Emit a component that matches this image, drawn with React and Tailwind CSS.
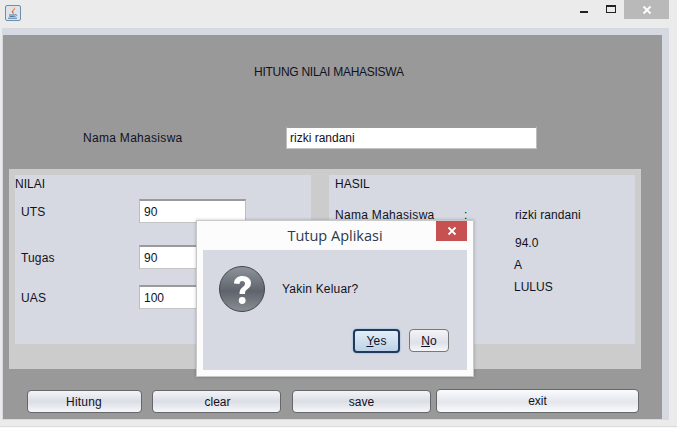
const font = { fontFamily: '"Liberation Sans", Arial, sans-serif' };

function JavaIcon() {
  return (
    <svg width="16" height="16" viewBox="0 0 16 16">
      <rect x="0.5" y="0.5" width="15" height="15" rx="1.5" fill="#dfe4ea" stroke="#6d8fae" />
      <path d="M9.5 2C10.5 4 6.5 5 6.8 7C7 8 8 8.5 8 9.5C9.5 8.2 8.3 7 8.3 6.2C8.3 5 11.5 4.2 9.5 2Z" fill="#e8702a" />
      <path d="M4 10H10M4.5 11.5H9.5M3 13.2H12" stroke="#4d7ba3" strokeWidth="1" fill="none" />
      <path d="M10 9.6C12.3 9 12.3 11.4 10 11.4" stroke="#4d7ba3" strokeWidth="0.8" fill="none" />
    </svg>
  );
}

function Field({ value, className }) {
  return (
    <div className={`bg-white border border-t-2 border-t-[#9a9a9a] border-l-[#bdbdbd] border-r-[#bdbdbd] border-b-[#c4c4c4] flex items-center text-[12px] text-[#111122] ${className}`}>
      {value}
    </div>
  );
}

function AppButton({ label, className }) {
  return (
    <button className={`rounded-[4px] border border-[#66676b] text-[12px] text-[#111122] flex items-center justify-center ${className}`}>
      {label}
    </button>
  );
}

function NilaiRow({ label, value, className }) {
  return (
    <div className={`flex items-center ${className}`}>
      <span className="w-[124px] pl-[6px] pt-[1px] text-[12px] tracking-[0.15px] text-[#111122]">{label}</span>
      <Field value={value} className="w-[107px] h-[24px] pl-[4px]" />
    </div>
  );
}

function HasilText({ children, className }) {
  return <div className={`text-[12px] leading-[14px] text-[#111122] ${className}`}>{children}</div>;
}

function QuestionIcon() {
  return (
    <svg width="46" height="46" viewBox="0 0 46 46">
      <defs>
        <linearGradient id="q" x1="0" y1="0" x2="0" y2="1">
          <stop offset="0" stopColor="#8f939a" />
          <stop offset="0.55" stopColor="#5f646c" />
          <stop offset="1" stopColor="#8a8e94" />
        </linearGradient>
      </defs>
      <circle cx="23" cy="23" r="22.5" fill="url(#q)" stroke="#43474d" />
      <path
        d="M15 17.5C15 12.5 19 10 23.5 10C28.5 10 32 13 32 17C32 20.5 30 22 28 23.5C26.3 24.8 26 25.5 26 28H20.5C20.5 24.5 21.3 23 23.5 21.3C25.3 19.9 26 19 26 17.5C26 16 25 15 23.3 15C21.5 15 20.5 16.2 20.5 18Z"
        fill="#fff"
      />
      <circle cx="23.2" cy="34.5" r="3.4" fill="#fff" />
    </svg>
  );
}

function Dialog() {
  return (
    <div className="absolute left-[196px] top-[220px] w-[278px] h-[157px] bg-[#fcfcfc] border border-[#c9c9c9] shadow-[0_0_3px_rgba(0,0,0,0.25)] flex flex-col px-[6px] pb-[6px]">
      <div className="h-[29px] shrink-0 relative flex items-center justify-center">
        <span className="text-[14.5px] text-[#2b3a4c]" style={{ fontFamily: '"Open Sans", sans-serif' }}>Tutup Aplikasi</span>
        <div className="absolute right-0 top-0 w-[31px] h-[20px] bg-[#c75050] flex items-center justify-center">
          <svg width="10" height="10" viewBox="0 0 10 10">
            <path d="M1.5 1.5L8.5 8.5M8.5 1.5L1.5 8.5" stroke="#fff" strokeWidth="1.8" />
          </svg>
        </div>
      </div>
      <div className="flex-1 bg-[#d6d9e1] flex flex-col">
        <div className="flex items-center pl-[16px] pt-[16px]">
          <QuestionIcon />
          <span className="ml-[17px] text-[12px] tracking-[0.2px] text-[#111122]">Yakin Keluar?</span>
        </div>
        <div className="flex justify-end gap-[9px] pr-[18px] mt-[17px]">
          <button className="w-[47px] h-[24px] rounded-[4px] border-2 border-[#1f3a5c] bg-[linear-gradient(#e3eef8_0%,#bcd2e6_100%)] shadow-[0_0_2px_#7aa7d0] text-[12px] tracking-[0.2px] text-[#111122]">
            <u>Y</u>es
          </button>
          <button className="w-[40px] h-[23px] rounded-[4px] border border-[#77787c] bg-[linear-gradient(#f3f4f7_0%,#dfe1e8_60%,#f6f7fa_100%)] text-[12px] tracking-[0.2px] text-[#111122]">
            <u>N</u>o
          </button>
        </div>
      </div>
    </div>
  );
}

export default function App() {
  const btn = "h-[23px] bg-[linear-gradient(#f3f4f7_0%,#dcdee6_50%,#f6f7fa_100%)]";
  return (
    <div className="relative w-[677px] h-[428px] overflow-hidden bg-[#ebebeb] flex flex-col" style={font}>
      <div className="h-[28px] shrink-0 flex items-start pl-[5px] pr-[8px]">
        <div className="pt-[5px]"><JavaIcon /></div>
        <div className="flex-1" />
        <div className="w-[8px] h-[2px] bg-[#222] mt-[11px] mr-[18px]" />
        <div className="w-[10px] h-[8px] border border-t-2 border-[#222] mt-[5px] mr-[8px]" />
        <div className="w-[45px] h-[19px] bg-[#b9b9b9] flex items-center justify-center">
          <svg width="10" height="10" viewBox="0 0 10 10">
            <path d="M1.5 1.5L8.5 8.5M8.5 1.5L1.5 8.5" stroke="#fff" strokeWidth="1.8" />
          </svg>
        </div>
      </div>

      <div className="ml-[2px] mr-[8px] h-[392px] shrink-0 bg-[#d6d9e1] pl-[1px] pr-[7px] pt-[7px]">
        <div className="h-[384px] bg-[#999999] flex flex-col">
          <div className="h-[91px] shrink-0 pt-[30px] pl-[251px] text-[12px] leading-[14px] tracking-[-0.27px] text-[#111122]">HITUNG NILAI MAHASISWA</div>
          <div className="h-[43px] shrink-0 flex items-start">
            <span className="w-[283px] pl-[80px] text-[12px] leading-[24px] tracking-[0.3px] text-[#111122]">Nama Mahasiswa</span>
            <Field value="rizki randani" className="w-[251px] h-[23px] pl-[3px]" />
          </div>

          <div className="ml-[6px] w-[632px] h-[200px] shrink-0 bg-[#cccccc] p-[6px] flex gap-[18px] items-start">
            <div className="w-[296px] h-[169px] bg-[#d6d9e1] flex flex-col">
              <div className="text-[12px] leading-[14px] text-[#111122] pt-[2px]">NILAI</div>
              <NilaiRow label="UTS" value="90" className="mt-[8px]" />
              <NilaiRow label="Tugas" value="90" className="mt-[22px]" />
              <NilaiRow label="UAS" value="100" className="mt-[16px]" />
            </div>
            <div className="w-[306px] h-[169px] bg-[#d6d9e1] pl-[6px] pt-[2px]">
              <HasilText>HASIL</HasilText>
              <div className="flex mt-[17px]">
                <HasilText className="w-[129px] tracking-[0.3px]">Nama Mahasiswa</HasilText>
                <HasilText className="w-[51px]">:</HasilText>
                <HasilText className="tracking-[0.08px]">rizki randani</HasilText>
              </div>
              <HasilText className="ml-[180px] mt-[14px]">94.0</HasilText>
              <HasilText className="ml-[179px] mt-[8px]">A</HasilText>
              <HasilText className="ml-[179px] mt-[8px]">LULUS</HasilText>
            </div>
          </div>

          <div className="flex items-end pl-[24px] pt-[20px]">
            <AppButton label="Hitung" className={`w-[115px] tracking-[0.2px] pr-[1px] ${btn}`} />
            <AppButton label="clear" className={`w-[129px] ml-[10px] pl-[2px] ${btn}`} />
            <AppButton label="save" className={`w-[139px] ml-[11px] ${btn}`} />
            <AppButton label="exit" className="w-[203px] h-[24px] ml-[5px] bg-[linear-gradient(#fafbfd_0%,#e4e6ec_55%,#fbfbfd_100%)]" />
          </div>
        </div>
      </div>

      <div className="flex-1" />
      <div className="h-[1px] shrink-0 bg-[#dcdcdc]" />
      <div className="h-[1px] shrink-0 bg-[#f8f8f8]" />
      <Dialog />
    </div>
  );
}
